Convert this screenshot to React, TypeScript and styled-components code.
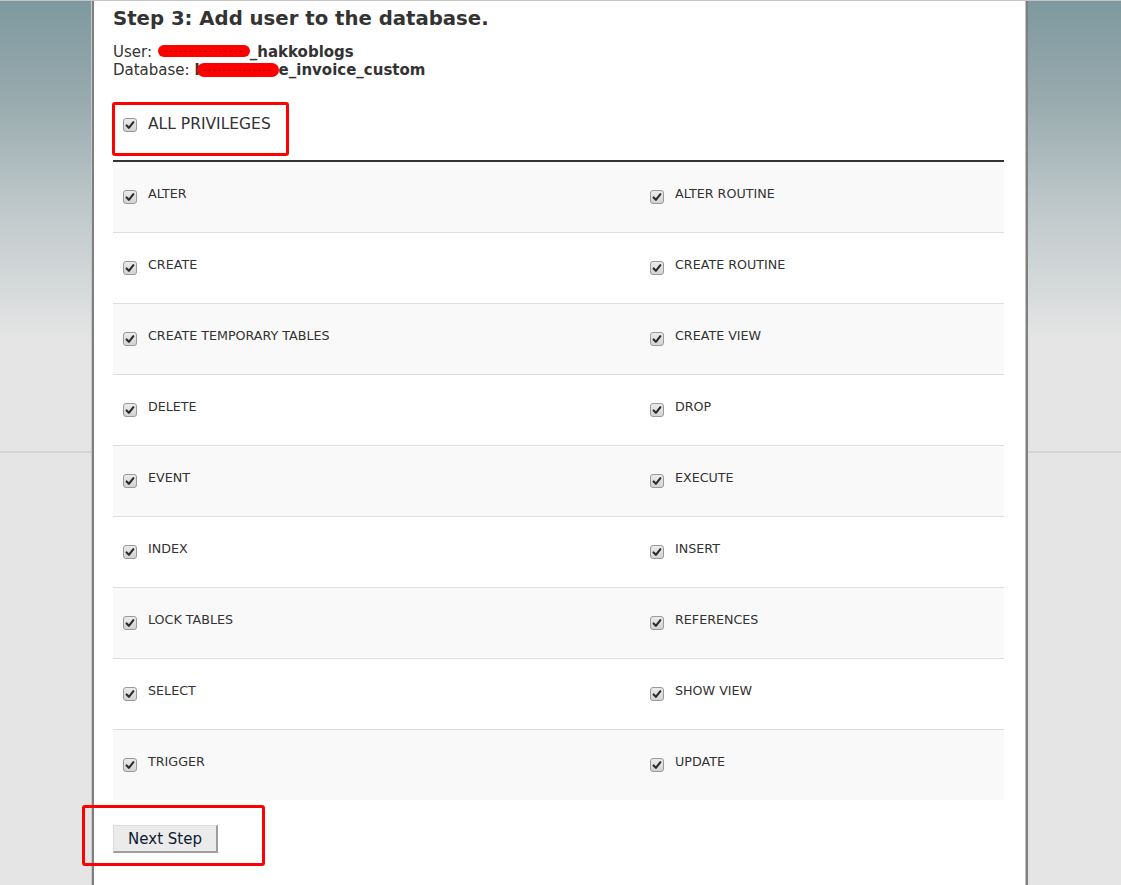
import React from "react";
import styled, { createGlobalStyle } from "styled-components";

const GlobalStyle = createGlobalStyle`
  html, body {
    margin: 0;
    padding: 0;
  }
  body {
    font-family: "DejaVu Sans", Verdana, sans-serif;
    color: #333;
    background-color: #e5e5e5;
    background-image: linear-gradient(
      to bottom,
      #7d999f 0px,
      #98aaae 100px,
      #bcc6c8 200px,
      #d9dcdd 300px,
      #e5e5e5 340px,
      #e5e5e5 451px,
      #d4d4d4 451px,
      #d4d4d4 453px,
      #e5e5e5 453px
    );
    background-repeat: no-repeat;
    overflow: hidden;
  }
`;

const Page = styled.div`
  border-top: 1px solid #c4c4c4;
  height: calc(100vh - 1px);
`;

const Panel = styled.main`
  box-sizing: border-box;
  margin-left: 92px;
  width: 936px;
  height: 100%;
  background: #fff;
  border-left: 2px solid #7f7f7f;
  border-right: 2px solid #7f7f7f;
  box-shadow: -1px 0 0 #c6c6c6, inset -1px 0 0 #c2c2c2;
  padding: 6px 22px 0 19px;
`;

const Heading = styled.h1`
  margin: 0;
  font-size: 19.7px;
  line-height: 23px;
  font-weight: bold;
  color: #333;
`;

const Info = styled.div`
  margin-top: 13px;
  font-size: 15px;
  line-height: 18px;
  color: #333;
`;

const Strong = styled.strong`
  font-weight: bold;
`;

const Redaction = styled.span<{ $w: number; $h: number; $drop?: number; $ml: number }>`
  position: relative;
  display: inline-block;
  width: ${(p) => p.$w}px;
  height: ${(p) => p.$h}px;
  margin-left: ${(p) => p.$ml}px;
  vertical-align: ${(p) => -(p.$drop ?? 0)}px;
  background: #f00;
  border-radius: ${(p) => p.$h / 2}px;
  &::after {
    content: "";
    position: absolute;
    left: 6px;
    right: 6px;
    top: 50%;
    height: 1px;
    background: repeating-linear-gradient(
      to right,
      #b00000 0 3px,
      transparent 3px 5px
    );
  }
`;

const AllRow = styled.div`
  position: relative;
  display: flex;
  align-items: flex-start;
  gap: 11px;
  margin-top: 36px;
  padding-left: 10px;
  font-size: 15.5px;
  line-height: 18px;
  color: #333;
`;

const Annotation = styled.div<{ $l: number; $t: number; $w: number; $h: number }>`
  position: absolute;
  left: ${(p) => p.$l}px;
  top: ${(p) => p.$t}px;
  width: ${(p) => p.$w}px;
  height: ${(p) => p.$h}px;
  box-sizing: border-box;
  border: 3px solid #ff0000;
  border-radius: 3px;
  pointer-events: none;
`;

const BoxWrap = styled.span<{ $mt: number }>`
  display: inline-flex;
  flex: none;
  margin-top: ${(p) => p.$mt}px;
  width: 14px;
  height: 14px;
`;

const Table = styled.div`
  margin-top: 27px;
  border-top: 2px solid #333;
  width: 891px;
`;

const Row = styled.div<{ $striped: boolean; $last: boolean }>`
  display: grid;
  grid-template-columns: 527px 1fr;
  height: 70px;
  background: ${(p) => (p.$striped ? "#f9f9f9" : "#fff")};
  border-bottom: ${(p) => (p.$last ? "none" : "1px solid #dddddd")};
`;

const Cell = styled.label`
  display: flex;
  align-items: flex-start;
  gap: 11px;
  padding: 25px 10px 0;
  font-size: 12.7px;
  line-height: 14px;
  color: #333;
`;

const Footer = styled.div`
  position: relative;
  margin-top: 25px;
  width: 105px;
`;

const Button = styled.button`
  box-sizing: border-box;
  width: 105px;
  height: 28px;
  padding: 0;
  font-family: "DejaVu Sans", Verdana, sans-serif;
  font-size: 15px;
  color: #0d1a30;
  background: #ebebeb;
  border-style: solid;
  border-width: 1px 2px 2px 1px;
  border-color: #dcdcdc #9d9d9d #9d9d9d #dcdcdc;
  border-radius: 0;
`;

const Check: React.FC<{ mt: number }> = ({ mt }) => (
  <BoxWrap $mt={mt}>
    <svg width="14" height="14" viewBox="0 0 14 14">
      <defs>
        <linearGradient id="cbg" x1="0" y1="0" x2="0" y2="1">
          <stop offset="0" stopColor="#ececec" />
          <stop offset="1" stopColor="#d2d2d2" />
        </linearGradient>
      </defs>
      <rect x="0.5" y="0.5" width="13" height="13" rx="2.5" fill="url(#cbg)" stroke="#9a9a9a" />
      <path d="M3.6 7.4 L5.9 9.8 L10.4 4.2" fill="none" stroke="#2b2b2b" strokeWidth="2.1" strokeLinecap="round" strokeLinejoin="round" />
    </svg>
  </BoxWrap>
);

const privileges: [string, string][] = [
  ["ALTER", "ALTER ROUTINE"],
  ["CREATE", "CREATE ROUTINE"],
  ["CREATE TEMPORARY TABLES", "CREATE VIEW"],
  ["DELETE", "DROP"],
  ["EVENT", "EXECUTE"],
  ["INDEX", "INSERT"],
  ["LOCK TABLES", "REFERENCES"],
  ["SELECT", "SHOW VIEW"],
  ["TRIGGER", "UPDATE"],
];

export default function App() {
  return (
    <>
      <GlobalStyle />
      <Page>
        <Panel>
          <Heading>Step 3: Add user to the database.</Heading>
          <Info>
            <div>
              User: <Redaction $w={92} $h={12} $ml={1} />
              <Strong>_hakkoblogs</Strong>
            </div>
            <div>
              Database: <Strong>l</Strong>
              <Redaction $w={82} $h={14} $drop={2} $ml={-3} />
              <Strong>e_invoice_custom</Strong>
            </div>
          </Info>
          <AllRow>
            <Check mt={3} />
            <span>ALL PRIVILEGES</span>
            <Annotation $l={-1} $t={-13} $w={177} $h={54} />
          </AllRow>
          <Table>
            {privileges.map(([a, b], i) => (
              <Row key={a} $striped={i % 2 === 0} $last={i === privileges.length - 1}>
                <Cell>
                  <Check mt={3} />
                  <span>{a}</span>
                </Cell>
                <Cell>
                  <Check mt={3} />
                  <span>{b}</span>
                </Cell>
              </Row>
            ))}
          </Table>
          <Footer>
            <Button type="button">Next Step</Button>
            <Annotation $l={-31} $t={-20} $w={183} $h={61} />
          </Footer>
        </Panel>
      </Page>
    </>
  );
}
